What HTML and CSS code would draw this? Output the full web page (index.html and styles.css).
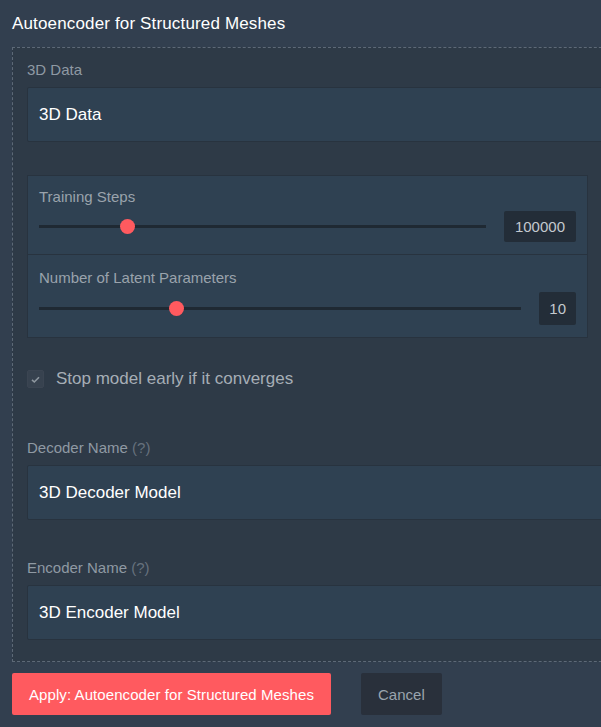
FILE: index.html
```html
<!DOCTYPE html>
<html lang="en">
<head>
  <meta charset="UTF-8" />
  <meta name="viewport" content="width=device-width, initial-scale=1.0"/>
  <title>Autoencoder for Structured Meshes</title>
  <link rel="stylesheet" href="styles.css">
</head>
<body>
  <h2 class="title">Autoencoder for Structured Meshes</h2>

  <div class="form-box">
    <div class="form-group">
      <label class="field-label">3D Data</label>
      <div class="text-input">3D Data</div>
    </div>

    <div class="slider-panel">
      <div class="slider-row first">
        <div class="slider-label">Training Steps</div>
        <div class="slider-control">
          <div class="track"><span class="thumb" style="left: 19.8%"></span></div>
          <div class="value">100000</div>
        </div>
      </div>
      <div class="slider-row second">
        <div class="slider-label">Number of Latent Parameters</div>
        <div class="slider-control">
          <div class="track"><span class="thumb" style="left: 28.4%"></span></div>
          <div class="value tall">10</div>
        </div>
      </div>
    </div>

    <div class="check-row">
      <span class="checkbox">
        <svg width="11" height="11" viewBox="0 0 11 11"><path d="M2 5.8 L4.3 8 L9 3.2" fill="none" stroke="#8e979f" stroke-width="1.6"/></svg>
      </span>
      <span class="check-text">Stop model early if it converges</span>
    </div>

    <div class="form-group decoder">
      <label class="field-label">Decoder Name <span class="hint">(?)</span></label>
      <div class="text-input">3D Decoder Model</div>
    </div>

    <div class="form-group encoder">
      <label class="field-label">Encoder Name <span class="hint">(?)</span></label>
      <div class="text-input">3D Encoder Model</div>
    </div>
  </div>

  <div class="actions">
    <button class="btn apply">Apply: Autoencoder for Structured Meshes</button>
    <button class="btn cancel">Cancel</button>
  </div>
</body>
</html>
```

FILE: styles.css
```css
body {
  margin: 0;
  padding: 14px 12px 0 12px;
  background-color: #323f4f;
  font-family: "Liberation Sans", Arial, sans-serif;
  overflow: hidden;
}

.title {
  margin: 0 0 13px 0;
  font-size: 17px;
  letter-spacing: 0.15px;
  line-height: 20px;
  font-weight: normal;
  color: #ffffff;
}

.form-box {
  width: 640px;
  box-sizing: border-box;
  border: 1px dashed #5d6977;
  background-color: #2e3a47;
  padding: 13px 14px 21px 14px;
}

.form-group {
  display: flex;
  flex-direction: column;
}

.field-label {
  font-size: 15px;
  line-height: 18px;
  color: #8f99a3;
  margin-bottom: 8px;
}

.hint {
  color: #66717d;
}

.text-input {
  height: 55px;
  box-sizing: border-box;
  border: 1px solid #28333f;
  border-radius: 2px;
  background-color: #2f4152;
  color: #ffffff;
  font-size: 17px;
  line-height: 53px;
  padding-left: 11px;
}

.slider-panel {
  width: 561px;
  box-sizing: border-box;
  margin-top: 33px;
  border: 1px solid #28333f;
  background-color: #2f4152;
}

.slider-row {
  padding: 12px 11px 12px 11px;
}

.slider-row.second {
  border-top: 1px solid #28333f;
  padding-top: 14px;
}

.slider-label {
  font-size: 15px;
  line-height: 18px;
  color: #9aa3ac;
}

.slider-control {
  display: flex;
  align-items: center;
  gap: 18px;
  margin-top: 5px;
}

.track {
  flex: 1;
  height: 3px;
  background-color: #1f2933;
  position: relative;
}

.thumb {
  position: absolute;
  top: -6px;
  width: 15px;
  height: 15px;
  margin-left: -7px;
  border-radius: 50%;
  background-color: #ff5a5f;
}

.value {
  height: 31px;
  line-height: 31px;
  padding: 0 11px;
  border-radius: 2px;
  background-color: #232d38;
  color: #c3c9cf;
  font-size: 15px;
}

.value.tall {
  height: 33px;
  line-height: 33px;
  padding: 0 10px;
}

.check-row {
  display: flex;
  align-items: center;
  height: 18px;
  margin-top: 32px;
}

.checkbox {
  width: 17px;
  height: 18px;
  box-sizing: border-box;
  border: 1px solid #3b4552;
  border-radius: 2px;
  background-color: #37424f;
  display: flex;
  align-items: center;
  justify-content: center;
}

.check-text {
  margin-left: 12px;
  font-size: 17px;
  line-height: 18px;
  color: #a6aeb6;
}

.decoder {
  margin-top: 51px;
}

.encoder {
  margin-top: 39px;
}

.actions {
  display: flex;
  gap: 30px;
  margin-top: 11px;
}

.btn {
  height: 42px;
  padding: 0 17px;
  border: none;
  border-radius: 2px;
  font-family: "Liberation Sans", Arial, sans-serif;
  font-size: 15px;
  cursor: pointer;
}

.apply {
  background-color: #ff5a5f;
  color: #ffffff;
  letter-spacing: 0.08px;
}

.cancel {
  background-color: #29303b;
  color: #9aa4ae;
}
```
